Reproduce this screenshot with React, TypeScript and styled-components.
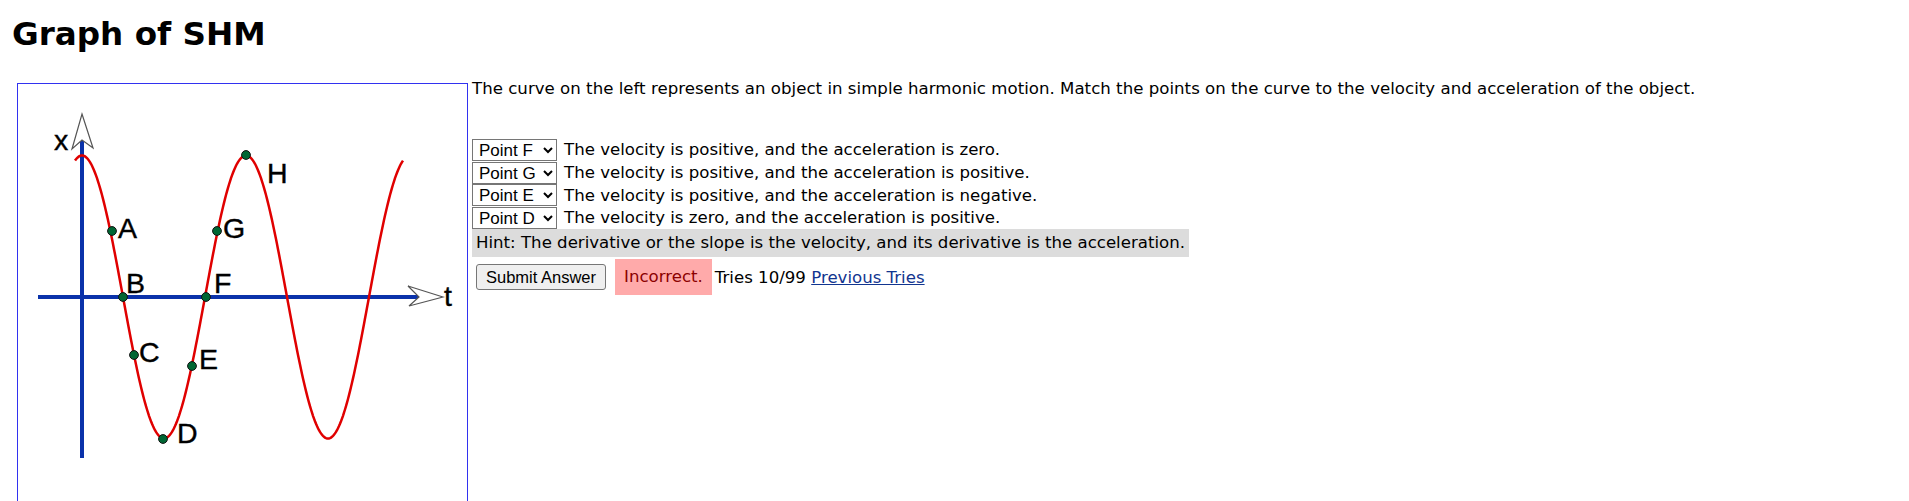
import styled, { createGlobalStyle } from "styled-components";

const GlobalStyle = createGlobalStyle`
	body {
		margin: 0;
		background: #fff;
		color: #000;
		font-family: "DejaVu Sans", Verdana, sans-serif;
		font-size: 16.6px;
	}
`;

const Page = styled.div`
	padding: 15px 0 0 12px;
`;

const Title = styled.h1`
	margin: 0;
	font-size: 32.6px;
	line-height: 38px;
	font-weight: bold;
`;

const Layout = styled.div`
	display: flex;
	align-items: flex-start;
	gap: 4px;
	margin: 30px 0 0 5px;
`;

const GraphFrame = styled.div`
	flex: none;
	width: 449px;
	height: 449px;
	border: 1px solid #3232f0;
	background: #fff;
`;

const Side = styled.div`
	display: flex;
	flex-direction: column;
	align-items: flex-start;
	margin-top: -3px;
`;

const Intro = styled.p`
	margin: 0 0 40px;
	line-height: 18.6px;
	letter-spacing: 0.02px;
`;

const MatchRow = styled.div`
	display: flex;
	align-items: center;
	gap: 7px;
	height: 22.67px;
`;

const PointSelect = styled.select`
	width: 85px;
	height: 22px;
	padding: 0 0 0 2px;
	font-family: "Liberation Sans", Arial, sans-serif;
	font-size: 17px;
	color: #000;
	background: #fff;
	border: 1px solid #767676;
	border-radius: 0;
`;

const Hint = styled.div`
	padding: 4px;
	line-height: 20px;
	background: #dcdcdc;
`;

const SubmitRow = styled.div`
	display: flex;
	align-items: center;
	margin-top: 2px;
`;

const SubmitButton = styled.button`
	height: 26px;
	margin-left: 4px;
	padding: 0 9px;
	font-family: "Liberation Sans", Arial, sans-serif;
	font-size: 16.5px;
	color: #000;
	background: #efefef;
	border: 1px solid #767676;
	border-radius: 3px;
`;

const Status = styled.span`
	margin-left: 9px;
	padding: 0 9px;
	line-height: 36px;
	background: #ffaaaa;
	color: #8b0000;
`;

const Tries = styled.span`
	margin-left: 3px;
	white-space: pre;
`;

const Link = styled.a`
	color: #12358f;
	text-decoration: underline;
`;

const matches = [
	{ point: "F", text: "The velocity is positive, and the acceleration is zero." },
	{ point: "G", text: "The velocity is positive, and the acceleration is positive." },
	{ point: "E", text: "The velocity is positive, and the acceleration is negative." },
	{ point: "D", text: "The velocity is zero, and the acceleration is positive." },
];

const letters = ["A", "B", "C", "D", "E", "F", "G", "H"];

const dots = [
	{ name: "A", cx: 112, cy: 231, lx: 118, ly: 238 },
	{ name: "B", cx: 123, cy: 297, lx: 126, ly: 293 },
	{ name: "C", cx: 134, cy: 355, lx: 139, ly: 362 },
	{ name: "D", cx: 163, cy: 439, lx: 177, ly: 443 },
	{ name: "E", cx: 192, cy: 366, lx: 199, ly: 369 },
	{ name: "F", cx: 206, cy: 297, lx: 214, ly: 293 },
	{ name: "G", cx: 217, cy: 231, lx: 223, ly: 238 },
	{ name: "H", cx: 246, cy: 155, lx: 267, ly: 183 },
];

// cosine wave, peak on the x axis origin
const curve = (() => {
	const pts: string[] = [];
	for (let x = 75; x <= 403; x += 1) {
		const y = 297 - 141.5 * Math.cos((2 * Math.PI * (x - 82)) / 164);
		pts.push(`${x},${y.toFixed(1)}`);
	}
	return "M" + pts.join(" L");
})();

function Graph() {
	return (
		<svg width='449' height='449' viewBox='0 0 449 449'>
			<g transform='translate(-18 -84)' fontFamily='"Liberation Sans", Arial, sans-serif' fontSize='28.5' fill='#000'>
				<line x1='82' y1='140' x2='82' y2='458' stroke='#0a32aa' strokeWidth='4' />
				<line x1='38' y1='297' x2='419' y2='297' stroke='#0a32aa' strokeWidth='4' />
				<polygon points='82,114 93,148 82,140 72,149' fill='#fff' stroke='#555' strokeWidth='1.2' />
				<polygon points='443,297 408,286 419,297 409,306' fill='#fff' stroke='#555' strokeWidth='1.2' />
				<path d={curve} fill='none' stroke='#e00000' strokeWidth='2.5' />
				{dots.map((d) => (
					<circle key={d.name} cx={d.cx} cy={d.cy} r='4.4' fill='#006633' stroke='#111' strokeWidth='1' />
				))}
				{dots.map((d) => (
					<text key={d.name} x={d.lx} y={d.ly} stroke='#000' strokeWidth='0.4'>
						{d.name}
					</text>
				))}
				<text x='54' y='150' stroke='#000' strokeWidth='0.4'>
					x
				</text>
				<text x='444' y='306' stroke='#000' strokeWidth='0.4'>
					t
				</text>
			</g>
		</svg>
	);
}

export default function App() {
	return (
		<Page>
			<GlobalStyle />
			<Title>Graph of SHM</Title>
			<Layout>
				<GraphFrame>
					<Graph />
				</GraphFrame>
				<Side>
					<Intro>
						The curve on the left represents an object in simple harmonic motion. Match the points on the curve to
						the velocity and acceleration of the object.
					</Intro>
					{matches.map((m) => (
						<MatchRow key={m.point}>
							<PointSelect defaultValue={m.point}>
								{letters.map((l) => (
									<option key={l} value={l}>
										Point {l}
									</option>
								))}
							</PointSelect>
							<span>{m.text}</span>
						</MatchRow>
					))}
					<Hint>Hint: The derivative or the slope is the velocity, and its derivative is the acceleration.</Hint>
					<SubmitRow>
						<SubmitButton>Submit Answer</SubmitButton>
						<Status>Incorrect.</Status>
						<Tries>Tries 10/99 </Tries>
						<Link href='#'>Previous Tries</Link>
					</SubmitRow>
				</Side>
			</Layout>
		</Page>
	);
}
